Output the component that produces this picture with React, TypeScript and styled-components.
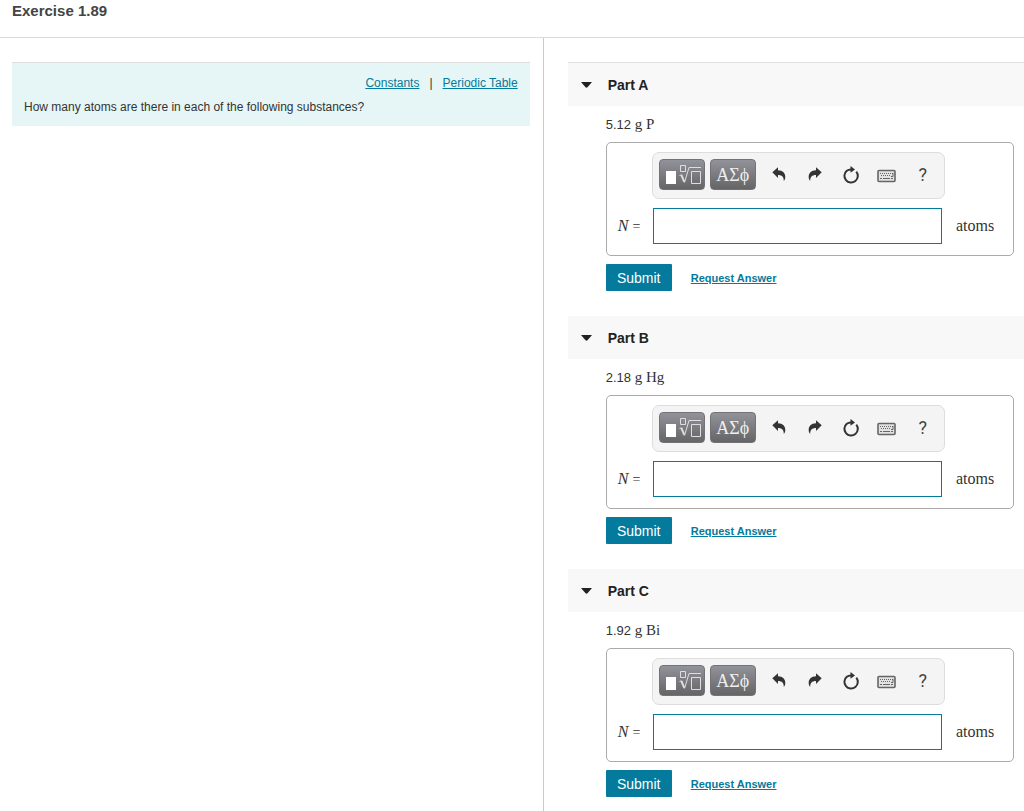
import React from "react";
import styled, { createGlobalStyle } from "styled-components";

const GlobalStyle = createGlobalStyle`
  * { box-sizing: border-box; }
  body {
    margin: 0;
    background: #fff;
    color: #333;
    font-family: "Liberation Sans", Arial, sans-serif;
    font-size: 12px;
    line-height: 16px;
  }
`;

const serif = `"Liberation Serif", "Times New Roman", serif`;

const Page = styled.div`
  display: flex;
  flex-direction: column;
  min-height: 100vh;
`;

const Header = styled.header`
  height: 38px;
  padding: 1px 12px;
  border-bottom: 1px solid #dcdcdc;
`;

const Title = styled.h1`
  margin: 0;
  font-size: 15px;
  line-height: 20px;
  color: #444;
`;

const Columns = styled.main`
  display: flex;
  flex: 1;
`;

const ProblemColumn = styled.section`
  flex: 0 0 53%;
  padding: 24px 13px 24px 12px;
`;

const AnswerColumn = styled.section`
  flex: 1;
  min-width: 0;
  padding: 24px 0 0 24px;
  border-left: 1px solid #c5ccd8;
`;

const Problem = styled.div`
  padding: 12px 12px 11px;
  border-top: 1px solid #dcdfdf;
  background: #e6f6f6;
`;

const Resources = styled.nav`
  display: flex;
  justify-content: flex-end;
  gap: 10px;
  margin-bottom: 8px;
`;

const Link = styled.a<{ $strong?: boolean }>`
  color: #047a9c;
  font-size: ${(p) => (p.$strong ? "11px" : "12px")};
  font-weight: ${(p) => (p.$strong ? "bold" : "normal")};
  text-decoration: underline;
`;

const Question = styled.p`
  margin: 0;
`;

const PartBlock = styled.section`
  & + & {
    margin-top: 25px;
  }
  &:first-child > h2 {
    border-top: 1px solid #e0e0e0;
  }
`;

const PartHeader = styled.h2`
  margin: 0;
  background: #f8f8f8;
`;

const PartToggle = styled.button`
  display: flex;
  align-items: center;
  gap: 16px;
  width: 100%;
  height: 43px;
  padding: 0 13px;
  border: 0;
  background: none;
  color: #222;
  font: bold 14px/16px "Liberation Sans", Arial, sans-serif;
  text-align: left;
`;

const PartBody = styled.div`
  padding: 8px 10px 0 38px;
`;

const Prompt = styled.p`
  height: 20px;
  margin: 0 0 8px;
  font-size: 13px;
  line-height: 20px;
`;

const Unit = styled.span`
  font-family: ${serif};
  font-size: 15px;
`;

const AnswerBox = styled.div`
  display: flex;
  flex-direction: column;
  gap: 9px;
  height: 114px;
  padding: 9px 11px 10px;
  border: 1px solid #aaa;
  border-radius: 5px;
`;

const Toolbar = styled.div`
  display: flex;
  align-items: flex-start;
  align-self: flex-start;
  height: 47px;
  margin-left: 34px;
  padding: 6px 3px 0 6px;
  border: 1px solid #ddd;
  border-radius: 7px;
  background: #f4f4f4;
`;

const PaletteButton = styled.button`
  display: flex;
  align-items: center;
  justify-content: center;
  width: 46px;
  height: 31px;
  margin-right: 5px;
  padding: 0;
  border: 1px solid #737377;
  border-radius: 4px;
  background: linear-gradient(#92929a, #656567);
  color: #eee;
  font: 18px/24px ${serif};
`;

const ToolButton = styled.button`
  display: flex;
  align-items: center;
  justify-content: center;
  width: 36px;
  height: 31px;
  padding: 0;
  border: 0;
  background: none;
  color: #444;
  font: 18px/20px Roboto, Arial, sans-serif;
`;

const Equation = styled.div`
  display: flex;
  align-items: center;
`;

const Label = styled.label`
  flex: 0 0 35px;
  font-family: ${serif};
  font-size: 16px;
`;

const Equals = styled.span`
  font-size: 14px;
`;

const AnswerInput = styled.input`
  flex: 1;
  min-width: 0;
  height: 36px;
  padding: 0 8px;
  border: 1px solid #047a9c;
  background: #fff;
  font: 16px/20px ${serif};
`;

const AnswerUnit = styled.span`
  flex: 0 0 60px;
  padding-left: 14px;
  font-family: ${serif};
  font-size: 16px;
`;

const Actions = styled.div`
  display: flex;
  align-items: center;
  gap: 19px;
  margin-top: 8px;
`;

const Submit = styled.button`
  width: 66px;
  height: 27px;
  padding: 0;
  border: 0;
  border-radius: 1px;
  background: #047a9c;
  color: #fff;
  font: 14px/16px "Liberation Sans", Arial, sans-serif;
`;

const Caret = () => (
  <svg width="11" height="6" viewBox="0 0 11 6" aria-hidden="true">
    <path d="M0 0h11L6.5 5.3q-1 .8-2 0z" fill="#222" />
  </svg>
);

const RootIcon = () => (
  <svg width="38" height="25" viewBox="0 0 38 25" fill="none" stroke="#dedee0" aria-hidden="true">
    <path d="M3 9h10v13H3z" fill="#fff" stroke="none" />
    <path d="M17.500 3.500h5v6h-5z" />
    <path d="M16.500 13.500l2-.7" />
    <path d="M18.300 12.800l3 7" strokeWidth="2" />
    <path d="M21.500 20.500L26 5.500h12" />
    <path d="M28.500 9.500h9v12h-9z" />
  </svg>
);

const TurnIcon = ({ forward = false }: { forward?: boolean }) => (
  <svg width="14" height="15" viewBox="0 0 14 15" aria-hidden="true">
    <path
      d="M.3 5.300L6 .3v2.900c4.800.2 7.600 3 7.300 7.300-.1 1.500-.7 2.700-1.500 3.500.1-4-1.700-6-5.800-6v2.900z"
      fill="#333"
      transform={forward ? "matrix(-1 0 0 1 14 0)" : undefined}
    />
  </svg>
);

const ResetIcon = () => (
  <svg width="18" height="18" viewBox="0 0 18 18" aria-hidden="true">
    <path d="M14.300 5.600A6.700 6.700 0 1 1 4.800 4.700Q6.800 3.200 9.500 3.400" fill="none" stroke="#333" strokeWidth="2" />
    <path d="M8.500 0l4.500 3.500-4.500 3.200z" fill="#333" />
  </svg>
);

const KeyboardIcon = () => (
  <svg width="19" height="16" viewBox="0 0 19 16" fill="none" aria-hidden="true">
    <rect x="1" y="3.500" width="17" height="11" rx="1" fill="#e2e2e2" stroke="#666" strokeWidth="1.600" />
    <path d="M3 6.500h13M4 8.500h10" stroke="#666" strokeDasharray="1 1" />
    <path d="M16 6v3.500h-2M3 11.500h2M6 11.500h7M14 11.500h2" stroke="#666" />
  </svg>
);

const Part = ({ name, mass, element }: { name: string; mass: string; element: string }) => {
  const inputId = `answer-${name}`;
  return (
    <PartBlock>
      <PartHeader>
        <PartToggle type="button" aria-expanded="true">
          <Caret />
          Part {name}
        </PartToggle>
      </PartHeader>
      <PartBody>
        <Prompt>
          {mass} <Unit>g {element}</Unit>
        </Prompt>
        <AnswerBox>
          <Toolbar role="toolbar" aria-label="Equation tools">
            <PaletteButton type="button" aria-label="Templates"><RootIcon /></PaletteButton>
            <PaletteButton type="button">ΑΣϕ</PaletteButton>
            <ToolButton type="button" aria-label="Undo"><TurnIcon /></ToolButton>
            <ToolButton type="button" aria-label="Redo"><TurnIcon forward /></ToolButton>
            <ToolButton type="button" aria-label="Reset"><ResetIcon /></ToolButton>
            <ToolButton type="button" aria-label="Keyboard shortcuts"><KeyboardIcon /></ToolButton>
            <ToolButton type="button">?</ToolButton>
          </Toolbar>
          <Equation>
            <Label htmlFor={inputId}>
              <i>N</i> <Equals>=</Equals>
            </Label>
            <AnswerInput id={inputId} type="text" />
            <AnswerUnit>atoms</AnswerUnit>
          </Equation>
        </AnswerBox>
        <Actions>
          <Submit type="button">Submit</Submit>
          <Link $strong href="#request">Request Answer</Link>
        </Actions>
      </PartBody>
    </PartBlock>
  );
};

export default function App() {
  return (
    <Page>
      <GlobalStyle />
      <Header>
        <Title>Exercise 1.89</Title>
      </Header>
      <Columns>
        <ProblemColumn>
          <Problem>
            <Resources>
              <Link href="#constants">Constants</Link>
              <span>|</span>
              <Link href="#periodic-table">Periodic Table</Link>
            </Resources>
            <Question>How many atoms are there in each of the following substances?</Question>
          </Problem>
        </ProblemColumn>
        <AnswerColumn>
          <Part name="A" mass="5.12" element="P" />
          <Part name="B" mass="2.18" element="Hg" />
          <Part name="C" mass="1.92" element="Bi" />
        </AnswerColumn>
      </Columns>
    </Page>
  );
}
